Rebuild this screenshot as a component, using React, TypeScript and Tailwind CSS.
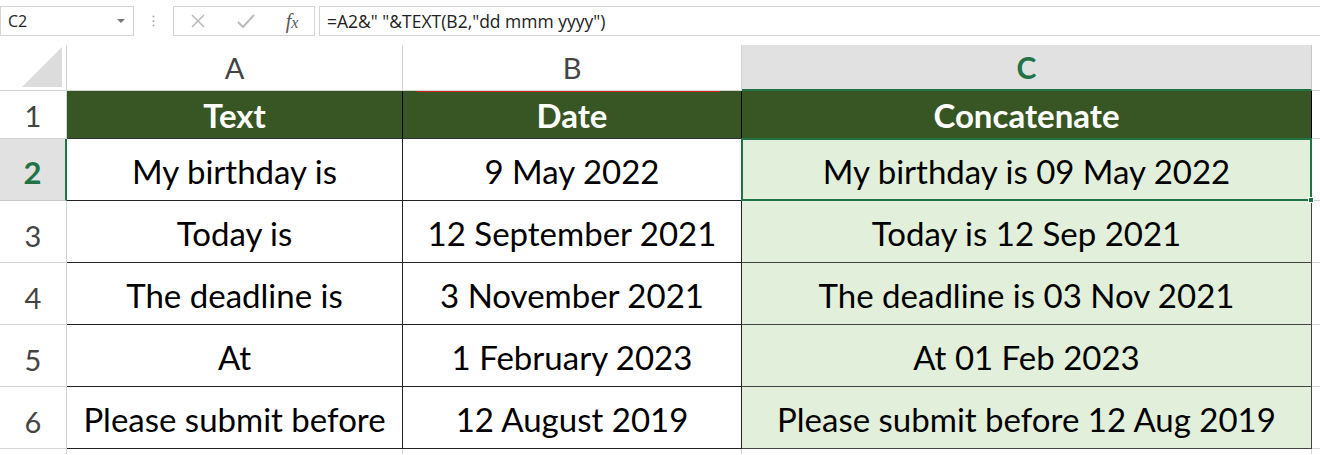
import React from "react";

const rows = [
  ["My birthday is", "9 May 2022", "My birthday is 09 May 2022"],
  ["Today is", "12 September 2021", "Today is 12 Sep 2021"],
  ["The deadline is", "3 November 2021", "The deadline is 03 Nov 2021"],
  ["At", "1 February 2023", "At 01 Feb 2023"],
  ["Please submit before", "12 August 2019", "Please submit before 12 Aug 2019"],
];

const font = { fontFamily: "Lato, 'Open Sans', sans-serif" };

export default function App() {
  return (
    <div className="w-[1320px] h-[455px] bg-white overflow-hidden" style={{ fontFamily: "'Open Sans', 'Noto Sans', sans-serif" }}>
      {/* formula bar */}
      <div className="h-[45px] flex items-start pt-[6px]">
        <div className="w-[134px] h-[30px] border border-[#d4d4d4] flex items-center justify-between pl-[7px] pr-[8px] text-[16px] text-[#222]">
          <span>C2</span>
          <svg width="8" height="5" viewBox="0 0 8 5"><path d="M0 0 L8 0 L4 4 Z" fill="#777" /></svg>
        </div>
        <div className="w-[39px] h-[30px] flex items-center justify-center">
          <svg width="3" height="12" viewBox="0 0 3 12">
            <circle cx="1.5" cy="1.5" r="1" fill="#aaa" />
            <circle cx="1.5" cy="6" r="1" fill="#aaa" />
            <circle cx="1.5" cy="10.5" r="1" fill="#aaa" />
          </svg>
        </div>
        <div className="w-[142px] h-[30px] border border-[#d4d4d4] flex items-center">
          <div className="w-[48px] flex justify-center">
            <svg width="14" height="14" viewBox="0 0 14 14"><path d="M1 1 L13 13 M13 1 L1 13" stroke="#bbb" strokeWidth="1.5" /></svg>
          </div>
          <div className="w-[48px] flex justify-center">
            <svg width="18" height="14" viewBox="0 0 18 14"><path d="M1 8 L6 13 L17 1" stroke="#bbb" strokeWidth="2" fill="none" /></svg>
          </div>
          <div className="w-[44px] flex items-baseline justify-center text-[20px] italic text-[#555] leading-none" style={{ fontFamily: "'Liberation Serif', serif" }}>
            <span>f</span><span className="text-[16px]">x</span>
          </div>
        </div>
        <div className="w-[4px]" />
        <div className="flex-1 h-[30px] border-y border-l border-[#d4d4d4] flex items-center pl-[7px] text-[17.5px] text-[#222]">
          =A2&amp;" "&amp;TEXT(B2,"dd mmm yyyy")
        </div>
      </div>

      {/* grid */}
      <div className="grid grid-cols-[67px_336px_339px_570px_8px] grid-rows-[46px_48px_62px_62px_62px_62px_62px_5px]">
        {/* column header row */}
        <div className="relative border-r border-b border-[#d4d4d4] bg-white">
          <svg className="absolute right-[4px] bottom-[3px]" width="40" height="40" viewBox="0 0 40 40"><path d="M40 0 L40 40 L0 40 Z" fill="#dcdcdc" /></svg>
        </div>
        <div className="border-r border-b border-[#d4d4d4] flex items-center justify-center text-[29px] text-[#444]" style={font}>A</div>
        <div className="border-r border-b border-[#d4d4d4] flex items-center justify-center text-[29px] text-[#444]" style={font}>B</div>
        <div className="bg-[#e1e1e1] border-r border-[#c6c6c6] border-b-2 border-b-[#217346] flex items-center justify-center text-[30px] font-bold text-[#217346]" style={font}>C</div>
        <div className="border-b border-[#d4d4d4]" />

        {/* row 1 */}
        <div className="border-r border-b border-[#d4d4d4] flex items-center justify-center pt-[3px] text-[29px] text-[#444]" style={font}>1</div>
        <div className="bg-[#375623] border-r border-black border-b border-b-[#333] flex items-center justify-center pt-[3px] text-[33px] font-bold text-white" style={font}>Text</div>
        <div className="relative bg-[#375623] border-r border-black border-b border-b-[#333] flex items-center justify-center pt-[3px] text-[33px] font-bold text-white" style={font}>
          <div className="absolute top-0 left-[14px] right-[21px] h-[1px] bg-[#d02020]" />
          Date
        </div>
        <div className="bg-[#375623] border-r border-black border-b border-b-[#333] flex items-center justify-center pt-[3px] text-[33px] font-bold text-white" style={font}>Concatenate</div>
        <div className="border-b border-[#d4d4d4]" />

        {rows.map((r, i) => {
          const sel = i === 0;
          return (
            <React.Fragment key={i}>
              <div
                className={
                  sel
                    ? "bg-[#e1e1e1] border-r-2 border-r-[#217346] border-b border-b-[#c6c6c6] flex items-end justify-center pb-[5px] text-[31px] font-bold text-[#217346]"
                    : "border-r border-b border-[#d4d4d4] flex items-end justify-center pb-[5px] text-[29px] text-[#444]"
                }
                style={font}
              >
                {i + 2}
              </div>
              <div className="border-r border-b border-[#222] flex items-center justify-center pt-[4px] text-[33px] text-black" style={font}>{r[0]}</div>
              <div className="border-r border-b border-[#222] flex items-center justify-center pt-[4px] text-[33px] text-black" style={font}>{r[1]}</div>
              <div
                className={
                  sel
                    ? "relative bg-[#e2efda] border-2 border-[#217346] -mt-[1px] -ml-[1px] flex items-center justify-center pt-[4px] text-[33px] text-black"
                    : "bg-[#e2efda] border-r border-b border-[#444] flex items-center justify-center pt-[4px] text-[33px] text-black"
                }
                style={font}
              >
                {r[2]}
                {sel && <div className="absolute -right-[4px] -bottom-[4px] w-[6px] h-[6px] bg-[#217346] border border-white" />}
              </div>
              <div className="border-b border-[#d4d4d4]" />
            </React.Fragment>
          );
        })}
        <div className="border-r border-[#d4d4d4]" />
        <div className="border-r border-[#d4d4d4]" />
        <div className="border-r border-[#d4d4d4]" />
        <div className="border-r border-[#d4d4d4]" />
        <div />
      </div>
    </div>
  );
}
